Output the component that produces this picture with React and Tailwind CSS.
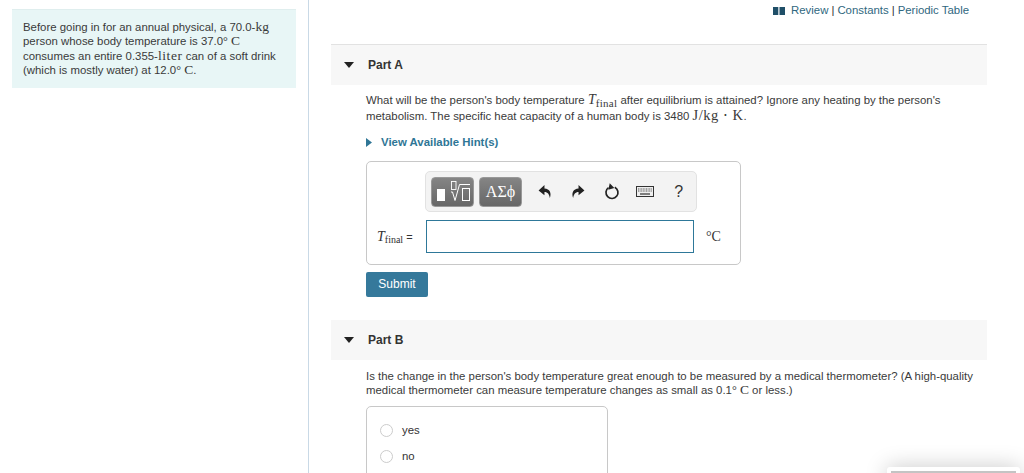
function M({ children, className = '' }) {
  return <span className={`font-['Liberation_Serif',serif] text-[13.5px] leading-none ${className}`}>{children}</span>;
}

function Deg() {
  return <span className="font-['Liberation_Serif',serif] text-[12px] leading-none">°</span>;
}

function PartHeader({ title }) {
  return (
    <div className="h-[40px] bg-[#f7f7f7] flex items-center pl-[13px]">
      <svg width="10" height="6" viewBox="0 0 10 6" className="mr-[14px]">
        <path d="M0 0H10L5 6Z" fill="#222" />
      </svg>
      <span className="font-bold text-[12px] text-[#333]">{title}</span>
    </div>
  );
}

function ToolIcon({ children }) {
  return <div className="w-[33.5px] flex justify-center items-center">{children}</div>;
}

function Toolbar() {
  return (
    <div className="w-[272px] h-[41px] bg-[#f3f3f3] border border-[#e2e2e2] rounded-[5px] flex items-center pl-[5px]">
      <div className="w-[43px] h-[30px] rounded-[4px] border border-[#999] bg-gradient-to-b from-[#858585] to-[#676767] flex items-center justify-center mr-[5px]">
        <svg width="34" height="24" viewBox="0 0 34 24" className="overflow-visible">
          <rect x="1" y="9" width="8" height="12" fill="#fff" />
          <rect x="15.5" y="1.5" width="4.5" height="8" fill="none" stroke="#fff" strokeWidth="0.9" />
          <path d="M15 12l1.5 0 2.5 8.5 4.5-16h10.5" fill="none" stroke="#fff" strokeWidth="1" />
          <rect x="26.5" y="8.5" width="7" height="12" fill="none" stroke="#fff" strokeWidth="1" />
        </svg>
      </div>
      <div className="w-[43px] h-[30px] rounded-[4px] border border-[#999] bg-gradient-to-b from-[#858585] to-[#676767] flex items-center justify-center font-['Liberation_Serif',serif] text-[16px] text-white mr-[6px]">
        ΑΣϕ
      </div>
      <ToolIcon>
        <svg width="14" height="15" viewBox="0 0 13 14">
          <path d="M6 1L0.5 6 6 10.5V7.5C9 7.5 10.5 9.5 11 13 12.8 8.5 11 4.5 6 4.2Z" fill="#222" />
        </svg>
      </ToolIcon>
      <ToolIcon>
        <svg width="14" height="15" viewBox="0 0 13 14">
          <path d="M7 1L12.5 6 7 10.5V7.5C4 7.5 2.5 9.5 2 13 .2 8.5 2 4.5 7 4.2Z" fill="#222" />
        </svg>
      </ToolIcon>
      <ToolIcon>
        <svg width="16" height="17" viewBox="0 0 16 17">
          <path d="M10.8 4.2A6 6 0 1 1 4.5 4.6" fill="none" stroke="#222" strokeWidth="1.7" />
          <path d="M5 0.8L10.5 4.6 5 7.5Z" fill="#222" transform="rotate(12 8 4)" />
        </svg>
      </ToolIcon>
      <ToolIcon>
        <svg width="18" height="11" viewBox="0 0 18 11">
          <rect x="0.5" y="0.5" width="17" height="10" fill="#eee" stroke="#333" />
          <path d="M2 3h14M2 5h14" stroke="#555" strokeWidth="1" strokeDasharray="1 0.6" />
          <path d="M4 8h10" stroke="#333" strokeWidth="1.2" />
        </svg>
      </ToolIcon>
      <ToolIcon>
        <span className="text-[16px] text-[#333]">?</span>
      </ToolIcon>
    </div>
  );
}

export default function App() {
  return (
    <div className="relative w-[1024px] h-[473px] overflow-hidden bg-white flex font-['Liberation_Sans',sans-serif] text-[11px] leading-[13px] text-[#333]">
      {/* Left: intro */}
      <div className="w-[309px] shrink-0 border-r border-[#c9d9e6] pt-[9px] pl-[12px]">
        <div className="w-[284px] h-[79px] bg-[#e8f6f6] border-t border-[#dfeeee] pl-[11px] pt-[10px] text-[11.4px] leading-[14.3px] text-[#3a3a3a]">
          Before going in for an annual physical, a 70.0-<M>kg</M>
          <br />
          person whose body temperature is 37.0<Deg /> <M>C</M>
          <br />
          consumes an entire 0.355-<M className="tracking-[0.6px]">liter</M> can of a soft drink
          <br />
          (which is mostly water) at 12.0<Deg /> <M>C</M>.
        </div>
      </div>

      {/* Right: parts */}
      <div className="w-[656px] ml-[22px]">
        <div className="h-[44px] pt-[4px] pr-[18px] flex justify-end items-start text-[11.4px] text-[#2f6780]">
          <div className="flex items-center">
            <svg width="12" height="8" viewBox="0 0 12 8" className="mr-[6px]">
              <path d="M0 0H5.3V8H0ZM6.5 0H12V8H6.5Z" fill="#1f4f68" />
            </svg>
            <span>Review</span>
            <span className="text-[#333] mx-[3px]">|</span>
            <span>Constants</span>
            <span className="text-[#333] mx-[3px]">|</span>
            <span>Periodic Table</span>
          </div>
        </div>

        <div className="border-t border-[#e2e2e2]">
          <PartHeader title="Part A" />
        </div>

        <div className="pl-[35px] pt-[8px]">
          <p className="text-[11.4px] leading-[15px] w-[610px] text-[#3a3a3a]">
            What will be the person's body temperature <M className="italic text-[14px]">T</M>
            <sub className="font-['Liberation_Serif',serif] text-[11px] tracking-[0.3px] leading-none">final</sub> after equilibrium is attained? Ignore any heating by the person's
            <br />
            metabolism. The specific heat capacity of a human body is 3480 <M className="text-[14.5px] tracking-[0.5px]">J/kg ⋅ K</M>.
          </p>

          <div className="flex items-center mt-[11px] h-[15px] font-bold text-[#2f7696] text-[11.4px]">
            <svg width="6" height="9" viewBox="0 0 6 9" className="mr-[9px]">
              <path d="M0 0L6 4.5 0 9Z" fill="#2f7696" />
            </svg>
            View Available Hint(s)
          </div>

          <div className="w-[375px] h-[104px] mt-[11px] border border-[#c8c8c8] rounded-[5px]">
            <div className="ml-[58px] mt-[9px]">
              <Toolbar />
            </div>
            <div className="flex items-center mt-[8px] pl-[10px]">
              <div className="w-[49px] whitespace-nowrap">
                <M className="italic text-[14px]">T</M>
                <sub className="font-['Liberation_Serif',serif] text-[10px] leading-none">final</sub>
                <span className="ml-[3px]">=</span>
              </div>
              <div className="w-[268px] h-[33px] border border-[#2e7899] bg-white" />
              <M className="ml-[12px] text-[14px]">°C</M>
            </div>
          </div>

          <button className="block mt-[7px] w-[62px] h-[25px] rounded-[2px] bg-[#35799b] text-white text-[12px]">
            Submit
          </button>
        </div>

        <div className="mt-[23px]">
          <PartHeader title="Part B" />
        </div>

        <div className="pl-[35px] pt-[9px]">
          <p className="text-[11.4px] leading-[14px] text-[#3a3a3a]">
            Is the change in the person's body temperature great enough to be measured by a medical thermometer? (A high-quality
            <br />
            medical thermometer can measure temperature changes as small as 0.1<Deg /> <M>C</M> or less.)
          </p>
          <div className="w-[242px] h-[90px] mt-[9px] border border-[#c8c8c8] rounded-[5px] pl-[13px] pt-[10px]">
            <div className="flex items-center h-[26px]">
              <span className="w-[13px] h-[13px] rounded-full border border-[#ccc] mr-[9px]" />
              <span className="text-[11.4px]">yes</span>
            </div>
            <div className="flex items-center h-[26px]">
              <span className="w-[13px] h-[13px] rounded-full border border-[#ccc] mr-[9px]" />
              <span className="text-[11.4px]">no</span>
            </div>
          </div>
        </div>
      </div>

      {/* Floating widget peeking in at the bottom */}
      <div className="absolute left-[887px] top-[467px] w-[133px] h-[20px] bg-white rounded-[3px] shadow-[0_0_22px_rgba(0,0,0,0.22)] pt-[4px] px-[4px]">
        <div className="h-[3px] bg-[#c4c4c4]" />
      </div>
    </div>
  );
}
